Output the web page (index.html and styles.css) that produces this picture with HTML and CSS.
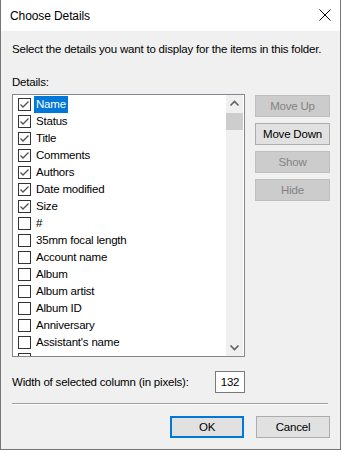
FILE: index.html
```html
<!DOCTYPE html>
<html lang="en">
<head>
    <meta charset="UTF-8">
    <meta name="viewport" content="width=device-width, initial-scale=1.0">
    <title>Choose Details</title>
    <link rel="stylesheet" href="styles.css">
</head>
<body>
    <div class="dialog">
        <div class="titlebar">
            <span class="title">Choose Details</span>
            <svg class="close" width="12" height="12" viewBox="0 0 12 12">
                <path d="M0.5 0.5 L11.5 11.5 M11.5 0.5 L0.5 11.5" stroke="#000" stroke-width="1" fill="none"/>
            </svg>
        </div>
        <div class="content">
            <p class="intro">Select the details you want to display for the items in this folder.</p>
            <div class="label">Details:</div>
            <div class="main">
                <div class="listbox">
                    <ul class="items">
                        <li class="item checked selected"><span class="box"></span><span class="text">Name</span></li>
                        <li class="item checked"><span class="box"></span><span class="text">Status</span></li>
                        <li class="item checked"><span class="box"></span><span class="text">Title</span></li>
                        <li class="item checked"><span class="box"></span><span class="text">Comments</span></li>
                        <li class="item checked"><span class="box"></span><span class="text">Authors</span></li>
                        <li class="item checked"><span class="box"></span><span class="text">Date modified</span></li>
                        <li class="item checked"><span class="box"></span><span class="text">Size</span></li>
                        <li class="item"><span class="box"></span><span class="text">#</span></li>
                        <li class="item"><span class="box"></span><span class="text">35mm focal length</span></li>
                        <li class="item"><span class="box"></span><span class="text">Account name</span></li>
                        <li class="item"><span class="box"></span><span class="text">Album</span></li>
                        <li class="item"><span class="box"></span><span class="text">Album artist</span></li>
                        <li class="item"><span class="box"></span><span class="text">Album ID</span></li>
                        <li class="item"><span class="box"></span><span class="text">Anniversary</span></li>
                        <li class="item"><span class="box"></span><span class="text">Assistant's name</span></li>
                        <li class="item"><span class="box"></span></li>
                    </ul>
                    <div class="scrollbar">
                        <div class="arrow">
                            <svg width="17" height="17" viewBox="0 0 17 17"><path d="M4.5 10.5 L8.5 6.5 L12.5 10.5" stroke="#606060" stroke-width="1.6" fill="none"/></svg>
                        </div>
                        <div class="track"><div class="thumb"></div></div>
                        <div class="arrow">
                            <svg width="17" height="17" viewBox="0 0 17 17"><path d="M4.5 6.5 L8.5 10.5 L12.5 6.5" stroke="#606060" stroke-width="1.6" fill="none"/></svg>
                        </div>
                    </div>
                </div>
                <div class="side">
                    <button class="btn" disabled>Move Up</button>
                    <button class="btn">Move Down</button>
                    <button class="btn" disabled>Show</button>
                    <button class="btn" disabled>Hide</button>
                </div>
            </div>
            <div class="width-row">
                <span>Width of selected column (in pixels):</span>
                <div class="num">132</div>
            </div>
            <div class="separator"></div>
            <div class="footer">
                <button class="btn default">OK</button>
                <button class="btn">Cancel</button>
            </div>
        </div>
    </div>
</body>
</html>
```

FILE: styles.css
```css
body {
    margin: 0;
    font-family: "Segoe UI", "Liberation Sans", Arial, sans-serif;
    font-size: 11.5px;
    letter-spacing: -0.2px;
    color: #000;
}
.dialog {
    width: 341px;
    height: 450px;
    box-sizing: border-box;
    border: 1px solid #767676;
    border-top: none;
    background-color: #f0f0f0;
    display: flex;
    flex-direction: column;
}
.titlebar {
    height: 31px;
    flex-shrink: 0;
    background-color: #fff;
    display: flex;
    align-items: center;
    justify-content: space-between;
    padding: 0 9px 0 9px;
    font-size: 12px;
    letter-spacing: -0.1px;
}
.close {
    display: block;
    margin-top: -1px;
}
.content {
    padding: 0 10px 0 11px;
    line-height: 16px;
}
.intro {
    margin: 10px 0 0;
}
.label {
    margin-top: 17px;
}
.main {
    display: flex;
    gap: 10px;
    margin-top: 4px;
}
.listbox {
    width: 233px;
    height: 263px;
    box-sizing: border-box;
    border: 1px solid #828790;
    background-color: #fff;
    display: flex;
    padding-right: 1px;
    overflow: hidden;
}
.items {
    list-style: none;
    margin: 0;
    padding: 1px 0 0 5px;
    flex: 1;
    overflow: hidden;
}
.item {
    height: 17px;
    display: flex;
    align-items: center;
    white-space: nowrap;
}
.box {
    width: 13px;
    height: 13px;
    box-sizing: border-box;
    border: 1px solid #333;
    background-color: #fff;
    flex-shrink: 0;
    margin-right: 3px;
}
.checked .box {
    background: #fff url("data:image/svg+xml;utf8,<svg xmlns='http://www.w3.org/2000/svg' width='11' height='11' viewBox='0 0 11 11'><path d='M1.5 5.5 L4 8 L9.5 2.5' stroke='%23505050' stroke-width='1.3' fill='none'/></svg>") no-repeat center;
}
.text {
    padding: 0 2px;
    height: 17px;
    line-height: 17px;
}
.selected .text {
    background-color: #0078d7;
    color: #fff;
}
.scrollbar {
    width: 17px;
    background-color: #f0f0f0;
    display: flex;
    flex-direction: column;
}
.arrow {
    height: 17px;
}
.arrow svg {
    display: block;
}
.track {
    flex: 1;
    padding-top: 1px;
}
.thumb {
    height: 17px;
    background-color: #cdcdcd;
}
.side {
    display: flex;
    flex-direction: column;
    gap: 6px;
    padding-top: 1px;
}
.btn {
    width: 75px;
    height: 22px;
    padding: 0;
    font-family: inherit;
    font-size: 11.5px;
    letter-spacing: -0.2px;
    color: #000;
    background-color: #e1e1e1;
    border: 1px solid #adadad;
    border-radius: 0;
}
.btn:disabled {
    background-color: #cccccc;
    border-color: #bfbfbf;
    color: #838383;
}
.btn.default {
    border: 2px solid #0078d7;
}
.width-row {
    display: flex;
    align-items: center;
    justify-content: space-between;
    width: 233px;
    margin-top: 14px;
}
.num {
    width: 30px;
    height: 22px;
    box-sizing: border-box;
    border: 1px solid #7a7a7a;
    background-color: #fff;
    text-align: center;
    line-height: 20px;
}
.separator {
    margin: 10px 2px 0 0;
    border-top: 1px solid #a0a0a0;
    border-bottom: 1px solid #fff;
}
.footer {
    display: flex;
    justify-content: flex-end;
    gap: 12px;
    margin-top: 11px;
}
.footer .btn {
    width: 74px;
}
```
